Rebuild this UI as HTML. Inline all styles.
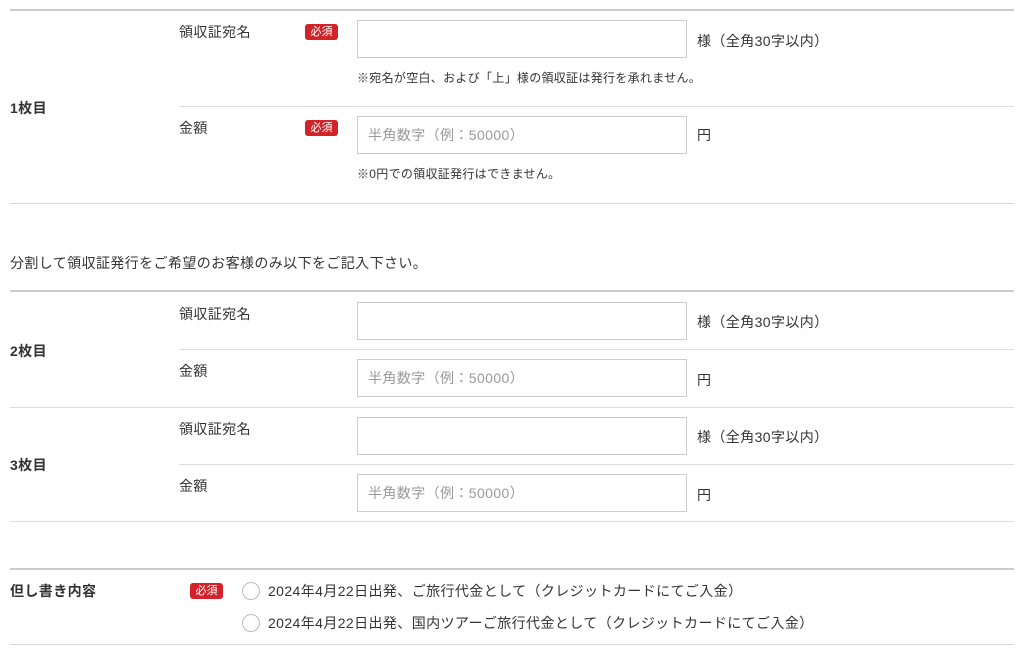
<!DOCTYPE html>
<html><head><meta charset="utf-8"><style>
body{margin:0;width:1024px;height:656px;background:#fff;position:relative;font-family:"Liberation Sans","Noto Sans CJK JP",sans-serif;color:#333;font-size:14px;overflow:hidden;letter-spacing:0.4px}
.a{position:absolute;white-space:nowrap;line-height:1}
.t{position:absolute;left:10px;width:1004px;height:2px;background:#ccc}
.l{position:absolute;height:1px;background:#ddd;left:179px;width:835px}
.f{left:10px;width:1004px}
.in{position:absolute;left:357px;width:328px;height:36px;border:1px solid #ccc;background:#fff;box-sizing:content-box}
.ph{position:absolute;left:10px;top:11px;color:#999;font-size:14px;line-height:1;white-space:nowrap}
.b{position:absolute;background:#d2232a;color:#fff;font-size:11px;line-height:16px;height:16px;width:33px;text-align:center;border-radius:3px;letter-spacing:0}
.bo{font-weight:bold}
.n{font-size:12px;letter-spacing:0.3px}
.r{position:absolute;width:16px;height:16px;border:1px solid #bbb;border-radius:50%}
</style></head><body>
<div class="t" style="top:9px"></div>
<div class="a" style="left:179px;top:25px">領収証宛名</div><div class="b" style="left:305px;top:24px">必須</div>
<div class="in" style="top:20px"></div>
<div class="a" style="left:697px;top:34px">様（全角30字以内）</div>
<div class="a n" style="left:357px;top:72px">※宛名が空白、および「上」様の領収証は発行を承れません。</div>
<div class="l" style="top:106px"></div>
<div class="a bo" style="left:10px;top:101px">1枚目</div>
<div class="a" style="left:179px;top:121px">金額</div><div class="b" style="left:305px;top:120px">必須</div>
<div class="in" style="top:116px"><span class="ph">半角数字（例：50000）</span></div>
<div class="a" style="left:697px;top:128px">円</div>
<div class="a n" style="left:357px;top:168px">※0円での領収証発行はできません。</div>
<div class="l f" style="top:203px"></div>
<div class="a" style="left:10px;top:256px">分割して領収証発行をご希望のお客様のみ以下をご記入下さい。</div>
<div class="t" style="top:290px"></div>
<div class="a" style="left:179px;top:307px">領収証宛名</div>
<div class="in" style="top:302px"></div>
<div class="a" style="left:697px;top:315px">様（全角30字以内）</div>
<div class="l" style="top:349px"></div>
<div class="a bo" style="left:10px;top:344px">2枚目</div>
<div class="a" style="left:179px;top:364px">金額</div>
<div class="in" style="top:359px"><span class="ph">半角数字（例：50000）</span></div>
<div class="a" style="left:697px;top:373px">円</div>
<div class="l f" style="top:407px"></div>
<div class="a" style="left:179px;top:422px">領収証宛名</div>
<div class="in" style="top:417px"></div>
<div class="a" style="left:697px;top:430px">様（全角30字以内）</div>
<div class="l" style="top:464px"></div>
<div class="a bo" style="left:10px;top:458px">3枚目</div>
<div class="a" style="left:179px;top:479px">金額</div>
<div class="in" style="top:474px"><span class="ph">半角数字（例：50000）</span></div>
<div class="a" style="left:697px;top:488px">円</div>
<div class="l f" style="top:521px"></div>
<div class="t" style="top:568px"></div>
<div class="a bo" style="left:10px;top:584px">但し書き内容</div>
<div class="b" style="left:190px;top:583px">必須</div>
<div class="r" style="left:242px;top:582px"></div>
<div class="a" style="left:268px;top:584px">2024年4月22日出発、ご旅行代金として（クレジットカードにてご入金）</div>
<div class="r" style="left:242px;top:614px"></div>
<div class="a" style="left:268px;top:616px">2024年4月22日出発、国内ツアーご旅行代金として（クレジットカードにてご入金）</div>
<div class="l f" style="top:644px"></div>
</body></html>
